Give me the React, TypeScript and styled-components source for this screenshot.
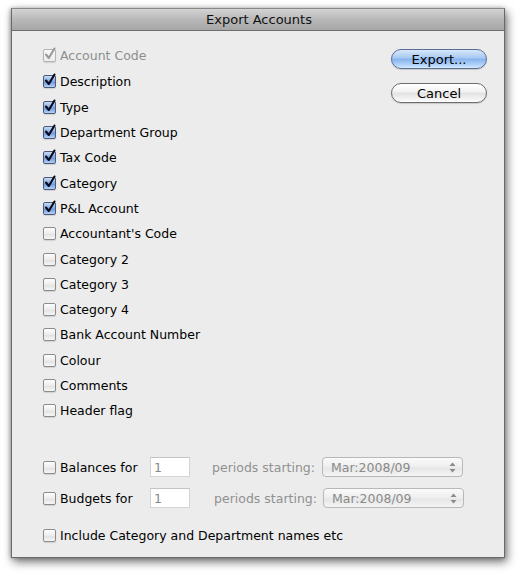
import React, { useState } from "react";
import styled, { createGlobalStyle } from "styled-components";

const Global = createGlobalStyle`
  html, body {
    margin: 0;
    padding: 0;
    background: #ffffff;
  }
  body {
    font-family: "DejaVu Sans", "Liberation Sans", sans-serif;
    font-size: 12.5px;
    color: #000;
  }
`;

const fields: { label: string; checked: boolean; disabled?: boolean }[] = [
  { label: "Account Code", checked: true, disabled: true },
  { label: "Description", checked: true },
  { label: "Type", checked: true },
  { label: "Department Group", checked: true },
  { label: "Tax Code", checked: true },
  { label: "Category", checked: true },
  { label: "P&L Account", checked: true },
  { label: "Accountant's Code", checked: false },
  { label: "Category 2", checked: false },
  { label: "Category 3", checked: false },
  { label: "Category 4", checked: false },
  { label: "Bank Account Number", checked: false },
  { label: "Colour", checked: false },
  { label: "Comments", checked: false },
  { label: "Header flag", checked: false },
];

const CheckMark = ({ color }: { color: string }) => (
  <svg width="12" height="13" viewBox="0 0 12 13" style={{ position: "absolute", left: 0, top: -3 }}>
    <path d="M2 7.5 L4.8 11 L10.5 1.5" fill="none" stroke={color} strokeWidth="2.1" strokeLinecap="round" strokeLinejoin="round" />
  </svg>
);

const Check = ({ checked, disabled, onToggle }: { checked: boolean; disabled?: boolean; onToggle?: () => void }) => (
  <Box $checked={checked} $disabled={disabled} onClick={disabled ? undefined : onToggle}>
    {checked && <CheckMark color={disabled ? "#9a9a9a" : "#0a0a1a"} />}
  </Box>
);

const Stepper = () => (
  <svg width="7" height="11" viewBox="0 0 7 11">
    <path d="M3.5 0.5 L6.5 4 L0.5 4 Z" fill="#8a8a8a" />
    <path d="M3.5 10.5 L6.5 7 L0.5 7 Z" fill="#8a8a8a" />
  </svg>
);

const App = () => {
  const [checks, setChecks] = useState(fields.map((f) => f.checked));
  const [balances, setBalances] = useState(false);
  const [budgets, setBudgets] = useState(false);
  const [names, setNames] = useState(false);

  const toggle = (i: number) => setChecks((c) => c.map((v, j) => (j === i ? !v : v)));

  return (
    <>
      <Global />
      <Stage>
        <Window>
          <TitleBar>Export Accounts</TitleBar>
          <Body>
            <Top>
              <List>
                {fields.map((f, i) => (
                  <Row key={f.label} $first={i === 0}>
                    <Check checked={checks[i]} disabled={f.disabled} onToggle={() => toggle(i)} />
                    <Label $disabled={f.disabled}>{f.label}</Label>
                  </Row>
                ))}
              </List>
              <Buttons>
                <PushButton $default>Export...</PushButton>
                <PushButton>Cancel</PushButton>
              </Buttons>
            </Top>

            <Periods>
              <PeriodRow>
                <Check checked={balances} onToggle={() => setBalances(!balances)} />
                <PeriodLabel>Balances for</PeriodLabel>
                <NumField defaultValue="1" />
                <Muted $offset={22} $width={110}>periods starting:</Muted>
                <Popup>
                  <span>Mar:2008/09</span>
                  <Stepper />
                </Popup>
              </PeriodRow>
              <PeriodRow>
                <Check checked={budgets} onToggle={() => setBudgets(!budgets)} />
                <PeriodLabel>Budgets for</PeriodLabel>
                <NumField defaultValue="1" />
                <Muted $offset={24} $width={109}>periods starting:</Muted>
                <Popup>
                  <span>Mar:2008/09</span>
                  <Stepper />
                </Popup>
              </PeriodRow>
            </Periods>

            <IncludeRow>
              <Check checked={names} onToggle={() => setNames(!names)} />
              <Label>Include Category and Department names etc</Label>
            </IncludeRow>
          </Body>
        </Window>
      </Stage>
    </>
  );
};

const Stage = styled.div`
  width: 517px;
  height: 574px;
  padding: 8px 0 0 11px;
  box-sizing: border-box;
`;

const Window = styled.div`
  width: 494px;
  height: 550px;
  box-sizing: border-box;
  border: 1px solid #6a6a6a;
  border-top-color: #888;
  background-color: #ececec;
  background-image: radial-gradient(#dcdcdc 0.6px, transparent 0.7px);
  background-size: 4px 4px;
  box-shadow: 2px 4px 9px rgba(0, 0, 0, 0.55), -1px 0 4px rgba(0, 0, 0, 0.25);
  display: flex;
  flex-direction: column;
`;

const TitleBar = styled.div`
  height: 22px;
  flex: none;
  display: flex;
  align-items: center;
  justify-content: center;
  font-size: 13px;
  color: #111;
  background: linear-gradient(#d4d4d4, #b8b8b8 50%, #a6a6a6);
  border-bottom: 1px solid #6f6f6f;
  padding: 0 0 1px 2px;
  box-sizing: border-box;
`;

const Body = styled.div`
  display: flex;
  flex-direction: column;
  padding: 12px 17px 0 31px;
`;

const Top = styled.div`
  display: flex;
  justify-content: space-between;
`;

const List = styled.div`
  display: flex;
  flex-direction: column;
`;

const Row = styled.div<{ $first?: boolean }>`
  display: flex;
  align-items: center;
  height: 25.3px;
  margin-bottom: ${(p) => (p.$first ? "1px" : "0")};
`;

const Box = styled.span<{ $checked?: boolean; $disabled?: boolean }>`
  position: relative;
  flex: none;
  width: 13px;
  height: 13px;
  box-sizing: border-box;
  border: 1px solid ${(p) => (p.$disabled ? "#b4b4b4" : p.$checked ? "#4a5a78" : "#8c8c8c")};
  border-radius: 2px;
  margin-right: 4px;
  background: ${(p) =>
    p.$disabled
      ? "linear-gradient(#f8f8f8, #ececec)"
      : p.$checked
      ? "linear-gradient(#c8dcf6, #7fa6e0 50%, #6a98de 55%, #b6d2f6)"
      : "linear-gradient(#fefefe, #ececec 50%, #e2e2e2 55%, #f6f6f6)"};
  box-shadow: 0 1px 1px rgba(0, 0, 0, 0.12);
  cursor: default;
`;

const Label = styled.span<{ $disabled?: boolean }>`
  white-space: nowrap;
  color: ${(p) => (p.$disabled ? "#8e8e8e" : "#000")};
`;

const Buttons = styled.div`
  display: flex;
  flex-direction: column;
  align-items: center;
  gap: 14px;
  padding-top: 6px;
`;

const PushButton = styled.button<{ $default?: boolean }>`
  width: 96px;
  height: 20px;
  border-radius: 10px;
  font-family: inherit;
  font-size: 13px;
  color: #000;
  padding: 0;
  border: 1px solid ${(p) => (p.$default ? "#5a6d97" : "#6d6d6d")};
  background: ${(p) =>
    p.$default
      ? "linear-gradient(#d8e8fb, #a6c8f2 45%, #86b2ec 50%, #b4d6fb 85%, #d6ecff)"
      : "linear-gradient(#ffffff, #f2f2f2 45%, #e2e2e2 50%, #f4f4f4 85%, #ffffff)"};
  box-shadow: 0 1px 1px rgba(0, 0, 0, 0.15);
  cursor: default;
`;

const Periods = styled.div`
  display: flex;
  flex-direction: column;
  gap: 11px;
  margin-top: 34px;
`;

const PeriodRow = styled.div`
  display: flex;
  align-items: center;
  height: 20px;
`;

const PeriodLabel = styled.span`
  width: 90px;
  flex: none;
  white-space: nowrap;
`;

const NumField = styled.input`
  width: 40px;
  height: 20px;
  flex: none;
  box-sizing: border-box;
  border: 1px solid #d4d4d4;
  border-top-color: #c4c4c4;
  background: #fff;
  font-family: inherit;
  font-size: 12.5px;
  color: #888;
  padding: 1px 3px 0;
  outline: none;
`;

const Muted = styled.span<{ $offset: number; $width: number }>`
  color: #909090;
  margin-left: ${(p) => p.$offset}px;
  width: ${(p) => p.$width}px;
  flex: none;
  white-space: nowrap;
`;

const Popup = styled.div`
  display: flex;
  align-items: center;
  justify-content: space-between;
  box-sizing: border-box;
  width: 141px;
  height: 20px;
  padding: 0 6px 0 8px;
  border: 1px solid #b8b8b8;
  border-radius: 4px;
  color: #8a8a8a;
  background: linear-gradient(#fafafa, #eeeeee 50%, #e6e6e6 55%, #f4f4f4);
`;

const IncludeRow = styled.div`
  display: flex;
  align-items: center;
  height: 20px;
  margin-top: 17px;
`;

export default App;
